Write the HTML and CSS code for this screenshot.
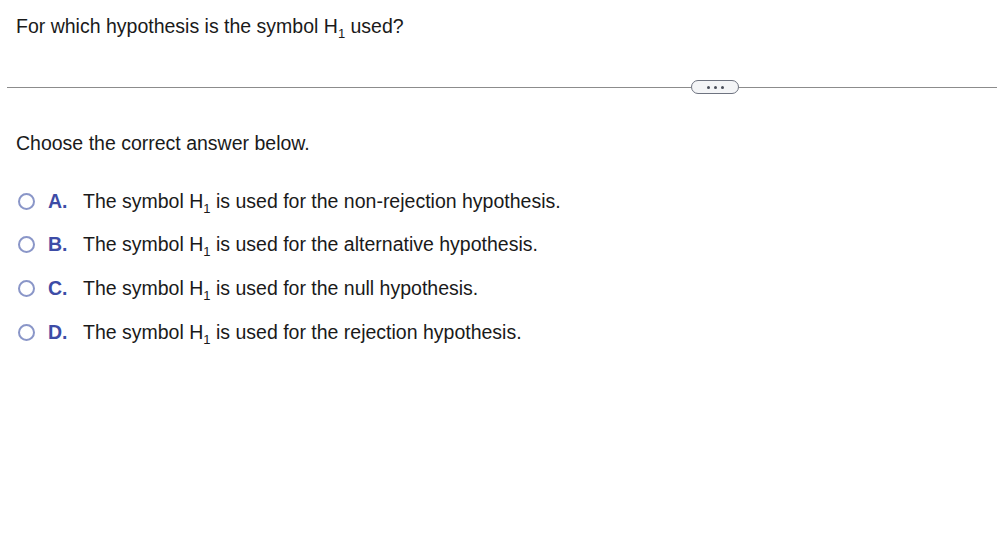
FILE: index.html
```html
<!DOCTYPE html>
<html>
<head>
<meta charset="utf-8">
<link rel="stylesheet" href="styles.css">
</head>
<body>
<div class="question">For which hypothesis is the symbol H<sub>1</sub> used?</div>
<div class="divider">
  <span class="rule rule-left"></span>
  <span class="more"><i></i><i></i><i></i></span>
  <span class="rule rule-right"></span>
</div>
<div class="prompt">Choose the correct answer below.</div>
<ul class="options">
  <li class="option"><span class="radio"></span><span class="letter">A.</span><span class="text">The symbol H<sub>1</sub> is used for the non-rejection hypothesis.</span></li>
  <li class="option"><span class="radio"></span><span class="letter">B.</span><span class="text">The symbol H<sub>1</sub> is used for the alternative hypothesis.</span></li>
  <li class="option"><span class="radio"></span><span class="letter">C.</span><span class="text">The symbol H<sub>1</sub> is used for the null hypothesis.</span></li>
  <li class="option"><span class="radio"></span><span class="letter">D.</span><span class="text">The symbol H<sub>1</sub> is used for the rejection hypothesis.</span></li>
</ul>
</body>
</html>
```
FILE: styles.css
```css
html, body {
  margin: 0;
  padding: 0;
  background: #fff;
}
body {
  font-family: "Liberation Sans", Arial, sans-serif;
  color: #1a1a1a;
  font-size: 19.5px;
}
sub {
  font-size: 13px;
  vertical-align: -5px;
  line-height: 0;
}
.question {
  padding: 14px 0 0 16px;
  line-height: 24px;
}
.divider {
  display: flex;
  align-items: center;
  margin: 42px 0 0 7px;
  height: 14px;
}
.rule {
  height: 1px;
  background: #8c8c8c;
}
.rule-left {
  width: 684px;
}
.rule-right {
  flex: 1;
}
.more {
  width: 46px;
  height: 12px;
  border: 1px solid #6e7380;
  border-radius: 7px;
  background: #f4f5f7;
  display: flex;
  justify-content: center;
  align-items: center;
  gap: 4px;
}
.more i {
  width: 3px;
  height: 3px;
  border-radius: 50%;
  background: #4a4f5a;
}
.prompt {
  margin: 37px 0 0 16px;
  line-height: 24px;
}
.options {
  list-style: none;
  margin: 34px 0 0 0;
  padding: 0 0 0 18px;
  display: flex;
  flex-direction: column;
  gap: 19.7px;
}
.option {
  display: flex;
  align-items: center;
  height: 24px;
}
.radio {
  width: 17px;
  height: 17px;
  border: 2px solid #8a96c8;
  border-radius: 50%;
  box-sizing: border-box;
  flex: none;
}
.letter {
  font-weight: bold;
  color: #3d4ca6;
  margin-left: 13px;
  width: 35px;
  flex: none;
}
.text {
  color: #1a1a1a;
}
```
